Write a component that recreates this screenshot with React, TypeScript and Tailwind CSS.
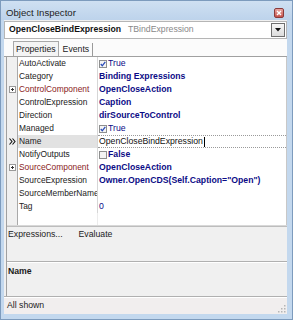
type RowKind = 'check' | 'checkBold' | 'bold' | 'edit' | 'plain';

interface PropRow {
  name: string;
  value: string;
  kind: RowKind;
  checked?: boolean;
  comp?: boolean;
}

const rows: PropRow[] = [
  { name: 'AutoActivate', value: 'True', kind: 'check', checked: true },
  { name: 'Category', value: 'Binding Expressions', kind: 'bold' },
  { name: 'ControlComponent', value: 'OpenCloseAction', kind: 'bold', comp: true },
  { name: 'ControlExpression', value: 'Caption', kind: 'bold' },
  { name: 'Direction', value: 'dirSourceToControl', kind: 'bold' },
  { name: 'Managed', value: 'True', kind: 'check', checked: true },
  { name: 'Name', value: 'OpenCloseBindExpression', kind: 'edit' },
  { name: 'NotifyOutputs', value: 'False', kind: 'checkBold', checked: false },
  { name: 'SourceComponent', value: 'OpenCloseAction', kind: 'bold', comp: true },
  { name: 'SourceExpression', value: 'Owner.OpenCDS(Self.Caption="Open")', kind: 'bold' },
  { name: 'SourceMemberName', value: '', kind: 'plain' },
  { name: 'Tag', value: '0', kind: 'plain' },
];

function CheckBox({ checked }: { checked?: boolean }) {
  return (
    <svg width="8" height="8" viewBox="0 0 8 8" className="shrink-0">
      <rect x="0.5" y="0.5" width="7" height="7" fill="#f4f4f4" stroke="#8e8f8f" />
      {checked && <path d="M1.8 4 L3.3 5.8 L6.3 1.8" fill="none" stroke="#2a4bb8" strokeWidth="1.3" />}
    </svg>
  );
}

function PlusBox() {
  return (
    <svg width="7" height="7" viewBox="0 0 7 7">
      <rect x="0.5" y="0.5" width="6" height="6" fill="#ffffff" stroke="#9a9a9a" />
      <path d="M2 3.5 H5 M3.5 2 V5" stroke="#333" strokeWidth="1" />
    </svg>
  );
}

function Chevrons() {
  return (
    <svg width="7" height="7" viewBox="0 0 7 7">
      <path d="M0.5 0.5 L3 3.5 L0.5 6.5 M3.5 0.5 L6 3.5 L3.5 6.5" fill="none" stroke="#111" strokeWidth="1.1" />
    </svg>
  );
}

function Row({ row }: { row: PropRow }) {
  const selected = row.kind === 'edit';
  return (
    <div className="flex h-[13px] leading-[13px]">
      <div className="w-[11px] shrink-0 flex items-center justify-center border-r border-[#a9a9a9] bg-[#f0f0f0]">
        {row.comp && <PlusBox />}
        {selected && <Chevrons />}
      </div>
      <div
        className={`w-[80px] shrink-0 overflow-hidden whitespace-nowrap pl-[1px] text-[8.4px] border-r border-[#d6d6d6] ${
          selected ? 'bg-[#e2e2e2]' : ''
        } ${row.comp ? 'text-[#8a1c1c]' : 'text-[#222]'}`}
      >
        {row.name}
      </div>
      <div
        className={`flex-1 flex items-center whitespace-nowrap overflow-hidden pl-[1px] ${
          selected ? 'border-y border-dotted border-[#9a9a9a] text-[#111]' : 'text-[#0b0b86]'
        }`}
      >
        {(row.kind === 'check' || row.kind === 'checkBold') && (
          <span className="mr-[1px] flex items-center">
            <CheckBox checked={row.checked} />
          </span>
        )}
        {row.kind === 'edit' ? (
          <span className="flex items-center">
            {row.value}
            <span className="ml-[1px] inline-block h-[10px] w-[1px] bg-black" />
          </span>
        ) : (
          <span className={row.kind === 'bold' || row.kind === 'checkBold' ? 'font-bold' : ''}>{row.value}</span>
        )}
      </div>
    </div>
  );
}

export default function App() {
  return (
    <div className="w-[293px] h-[320px] flex flex-col bg-[#c3d8ee] border border-[#7d9bbd] font-['Liberation_Sans',Arial,sans-serif] text-[8.7px] text-[#222] overflow-hidden">
      {/* Title bar */}
      <div className="h-[19px] shrink-0 flex items-center pl-[5px] pr-[8px] bg-gradient-to-b from-[#cfe0f2] to-[#bdd3eb]">
        <span className="text-[9.6px] text-[#1e1e1e] mt-[5px]">Object Inspector</span>
        <div className="ml-auto mt-[4px] w-[10px] h-[10px] rounded-[2px] border border-[#8a3a3a] bg-gradient-to-b from-[#e8a4a0] to-[#c4514b] flex items-center justify-center">
          <svg width="6" height="6" viewBox="0 0 6 6">
            <path d="M1 1 L5 5 M5 1 L1 5" stroke="#ffffff" strokeWidth="1.4" />
          </svg>
        </div>
      </div>

      {/* Client */}
      <div className="flex-1 flex flex-col ml-[3px] mr-[5px] mb-[5px] bg-[#f0f0f0]">
        {/* Combo */}
        <div className="h-[18px] shrink-0 flex items-center bg-white border border-[#b5b5b5] mt-[1px]">
          <span className="ml-[4px] font-bold text-[#111] whitespace-nowrap">OpenCloseBindExpression</span>
          <span className="ml-[7px] text-[#888] whitespace-nowrap">TBindExpression</span>
          <div className="ml-auto mr-[1px] w-[14px] h-[14px] border border-[#6f6f6f] bg-gradient-to-b from-[#f6f6f6] to-[#dcdcdc] flex items-center justify-center">
            <svg width="6" height="4" viewBox="0 0 6 4">
              <path d="M0 0 H6 L3 3.5 Z" fill="#111" />
            </svg>
          </div>
        </div>

        {/* Tabs */}
        <div className="h-[18px] shrink-0 flex items-end pl-[9px] border-b border-[#a0a0a0] bg-[#fbfbfb]">
          <div className="h-[15px] px-[2px] border border-b-0 border-[#a8a8a8] bg-[#f4f4f4] leading-[14px]">Properties</div>
          <div className="h-[13px] pl-[4px] pr-[3px] border-r border-[#9a9a9a] leading-[12px]">Events</div>
        </div>

        {/* Grid + panels */}
        <div className="flex-1 flex flex-col ml-[2px] border-l border-[#a0a0a0]">
          <div className="h-[168px] shrink-0 flex flex-col bg-white border-r border-[#c8c8c8]">
            {rows.map((r) => (
              <Row key={r.name} row={r} />
            ))}
            <div className="flex-1 flex">
              <div className="w-[11px] border-r border-[#a9a9a9] bg-[#f0f0f0]" />
              <div className="w-[80px] border-r border-[#ececec]" />
            </div>
          </div>
          <div className="h-[2px] shrink-0 border-t border-[#d8d8d8] bg-[#bdbdbd]" />
          <div className="h-[34px] shrink-0 pl-[1px] pt-[1px]">
            <span>Expressions...</span>
            <span className="ml-[16px]">Evaluate</span>
          </div>
          <div className="h-[2px] shrink-0 bg-[#b0b0b0] border-b border-white" />
          <div className="h-[32px] shrink-0 pl-[1px] pt-[2px] font-bold text-[#1a1a1a]">Name</div>
        </div>
        <div className="h-[2px] shrink-0 bg-[#b0b0b0] border-b border-white" />
        {/* Status bar */}
        <div className="h-[16px] shrink-0 flex items-center pl-[3px] bg-[#f1eeee] relative">
          <span>All shown</span>
          <svg width="8" height="8" viewBox="0 0 8 8" className="absolute right-[1px] bottom-[1px]">
            <rect x="6" y="0" width="1.5" height="1.5" fill="#b5b5b5" />
            <rect x="3" y="3" width="1.5" height="1.5" fill="#b5b5b5" />
            <rect x="6" y="3" width="1.5" height="1.5" fill="#b5b5b5" />
            <rect x="0" y="6" width="1.5" height="1.5" fill="#b5b5b5" />
            <rect x="3" y="6" width="1.5" height="1.5" fill="#b5b5b5" />
            <rect x="6" y="6" width="1.5" height="1.5" fill="#b5b5b5" />
          </svg>
        </div>
      </div>
    </div>
  );
}
